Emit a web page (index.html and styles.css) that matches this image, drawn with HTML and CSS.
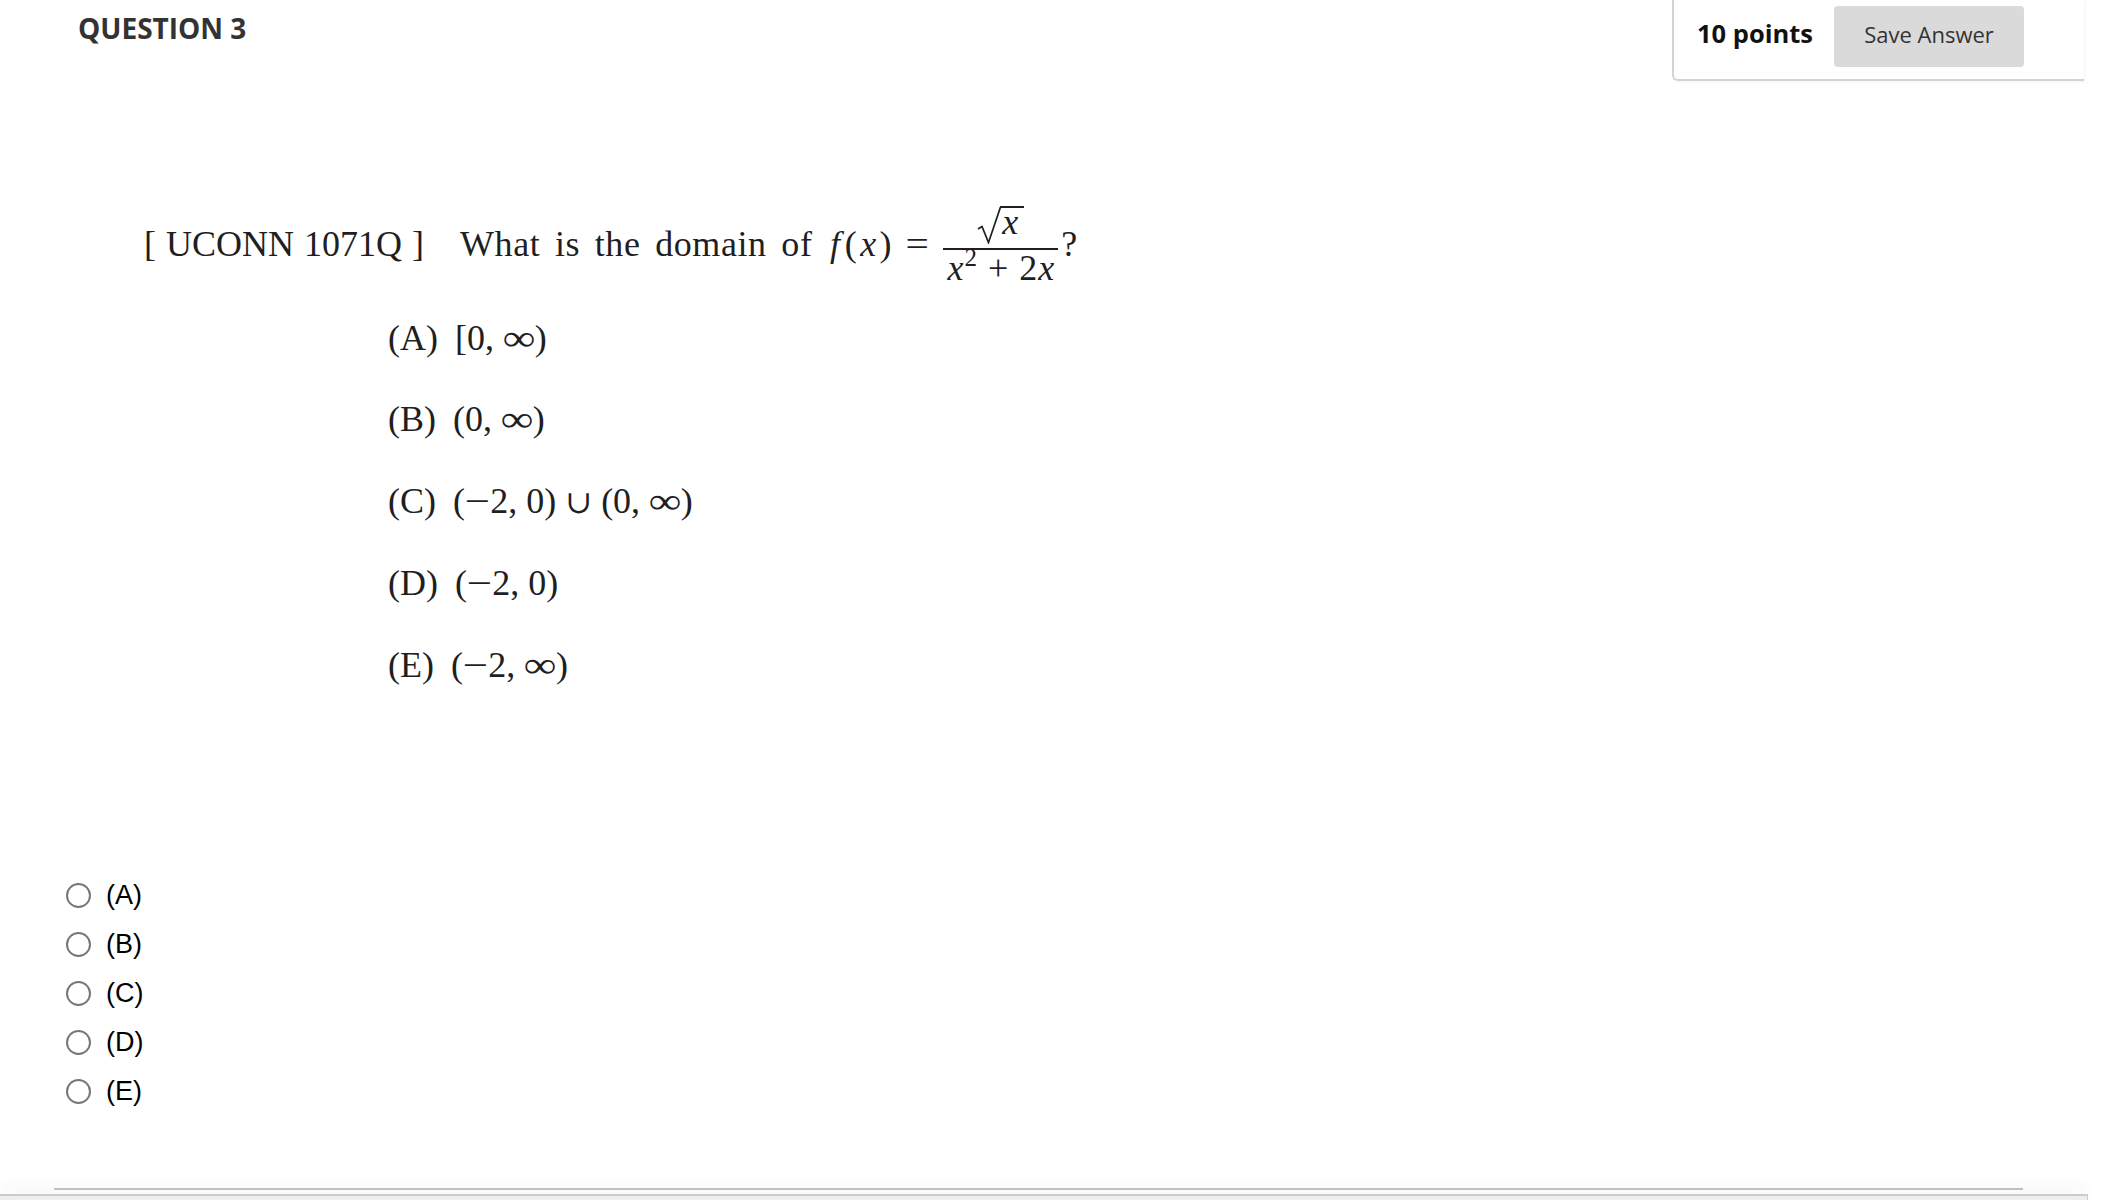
FILE: index.html
```html
<!DOCTYPE html>
<html lang="en">
<head>
<meta charset="utf-8">
<title>Question 3</title>
<link rel="stylesheet" href="styles.css">
</head>
<body>
  <header class="header">
    <h2 class="title">QUESTION 3</h2>
    <div class="points-box">
      <span class="points">10 points</span>
      <button class="save" type="button">Save Answer</button>
    </div>
  </header>

  <p class="question"><span class="tag">[ UCONN 1071Q ]</span><span class="prose">What is the domain of </span><span class="fx"><i class="mi f">f</i>(<i class="mi">x</i>)</span><span class="eq">=</span><span class="frac"><span class="num"><svg class="radical" width="24" height="38" viewBox="0 0 24 38"><polyline points="1,23 5,20.5 11.5,36.5 23.5,1" fill="none" stroke="#1f1f1f" stroke-width="1.7" stroke-linejoin="miter"/></svg><span class="rad-x"><i class="mi">x</i></span></span><span class="den"><i class="mi">x</i><span class="sup">2</span> + 2<i class="mi">x</i></span></span>?</p>

  <div class="options">
    <div class="opt"><span class="lbl">(A)</span>[0, <span class="inf">∞</span>)</div>
    <div class="opt"><span class="lbl">(B)</span>(0, <span class="inf">∞</span>)</div>
    <div class="opt"><span class="lbl">(C)</span>(<span class="minus">−</span>2, 0) <span class="cup">∪</span> (0, <span class="inf">∞</span>)</div>
    <div class="opt"><span class="lbl">(D)</span>(<span class="minus">−</span>2, 0)</div>
    <div class="opt"><span class="lbl">(E)</span>(<span class="minus">−</span>2, <span class="inf">∞</span>)</div>
  </div>

  <div class="answers">
    <label class="ans"><span class="radio"></span>(A)</label>
    <label class="ans"><span class="radio"></span>(B)</label>
    <label class="ans"><span class="radio"></span>(C)</label>
    <label class="ans"><span class="radio"></span>(D)</label>
    <label class="ans"><span class="radio"></span>(E)</label>
  </div>

  <div class="rule"></div>
  <footer class="footer"></footer>
</body>
</html>
```

FILE: styles.css
```css
html, body {
  margin: 0;
  padding: 0;
}

body {
  width: 2108px;
  height: 1200px;
  overflow: hidden;
  background: #ffffff;
  display: flex;
  flex-direction: column;
}

/* ---------- header ---------- */
.header {
  display: flex;
  justify-content: space-between;
  align-items: flex-start;
  flex: none;
}

.title {
  margin: 14px 0 0 78px;
  font: 700 28px/29px "Open Sans", "Liberation Sans", sans-serif;
  color: #333333;
}

.points-box {
  display: flex;
  align-items: center;
  gap: 21px;
  margin-right: 24px;
  padding: 6px 60px 12px 23px;
  border-left: 2px solid #d4d4d4;
  border-bottom: 2px solid #d4d4d4;
  border-bottom-left-radius: 6px;
  box-shadow: 1px 1px 3px rgba(0, 0, 0, 0.05);
}

.points {
  margin-bottom: 5px;
  font: 700 25.5px/1 "Open Sans", "Liberation Sans", sans-serif;
  color: #111111;
}

.save {
  width: 190px;
  height: 61px;
  padding: 0 0 5px;
  border: 0;
  border-radius: 4px;
  background: #dadada;
  font: 400 22px/1 "Open Sans", "Liberation Sans", sans-serif;
  color: #333333;
}

/* ---------- question (typeset math) ---------- */
.question {
  margin: 123px 0 0 144px;
  font: 36px/36px "Liberation Serif", "DejaVu Serif", serif;
  color: #1f1f1f;
  white-space: nowrap;
}

.tag {
  margin-right: 36px;
  word-spacing: 1px;
}

.prose {
  letter-spacing: 0.6px;
  word-spacing: 5px;
}

.mi {
  font-style: italic;
}

.fx {
  letter-spacing: 3.5px;
}

.f {
  margin-left: 3px;
  margin-right: 1px;
}

.eq {
  margin: 0 16px 0 12px;
  display: inline-block;
  transform: scaleX(1.15);
}

.frac {
  display: inline-flex;
  flex-direction: column;
  align-items: center;
  vertical-align: 22px;
  margin-right: 3px;
}

.num {
  display: block;
  line-height: 36px;
  padding-bottom: 4px;
}

.radical {
  vertical-align: -10px;
}

.rad-x {
  display: inline-block;
  line-height: 28px;
  border-top: 2px solid #1f1f1f;
  padding: 0 6px 0 2px;
  margin-left: -1px;
}

.den {
  display: block;
  line-height: 36px;
  padding: 0 3px 0 4px;
  letter-spacing: 1px;
  border-top: 2px solid #1f1f1f;
}

.sup {
  font-size: 25px;
  line-height: 0;
  vertical-align: 14px;
}

.options {
  margin: 12px 0 0 388px;
  font: 36px/81.4px "Liberation Serif", "DejaVu Serif", serif;
  color: #1f1f1f;
}

.lbl {
  margin-right: 17px;
}

.inf {
  display: inline-block;
  transform: scaleX(1.28);
  margin: 0 3px;
}

.minus {
  display: inline-block;
  transform: scaleX(1.25);
  margin: 0 3px 0 2px;
}

.cup {
  font-family: "DejaVu Serif", serif;
  font-size: 32px;
}

/* ---------- radio answers ---------- */
.answers {
  margin: 165px 0 0 66px;
  display: flex;
  flex-direction: column;
}

.ans {
  display: flex;
  align-items: center;
  gap: 15px;
  height: 49px;
  font: 27px/27px "Liberation Sans", Arial, sans-serif;
  color: #000000;
}

.radio {
  flex: none;
  width: 25px;
  height: 25px;
  box-sizing: border-box;
  border: 2px solid #777777;
  border-radius: 50%;
  background: #ffffff;
}

/* ---------- bottom ---------- */
.rule {
  flex: none;
  margin: auto 85px 4px 54px;
  height: 2px;
  background: #c4c4c4;
}

.footer {
  flex: none;
  height: 4px;
  margin-right: 20px;
  background: #eeeeee;
  border-top: 2px solid #cccccc;
  border-right: 1px solid #cccccc;
  box-shadow: 0 -6px 14px rgba(0, 0, 0, 0.06);
}
```
